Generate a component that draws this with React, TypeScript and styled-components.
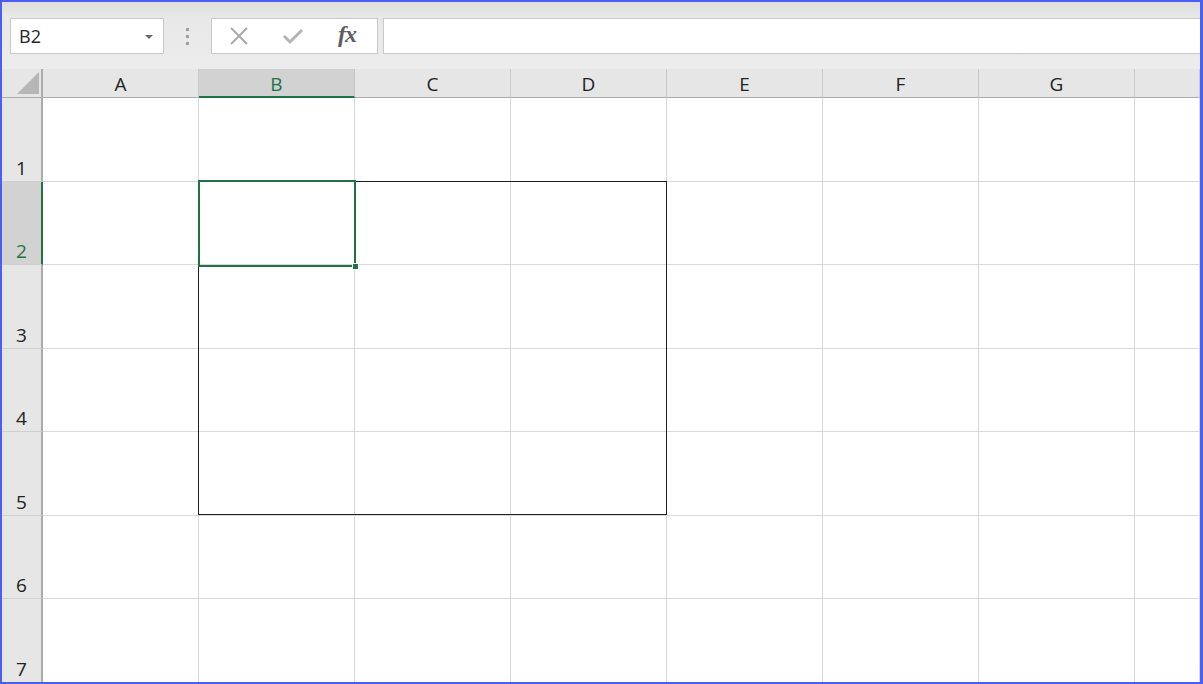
import React from 'react';
import styled, { createGlobalStyle } from 'styled-components';

const GlobalStyle = createGlobalStyle`
  html, body {
    margin: 0;
    padding: 0;
    background: #ffffff;
  }
  * {
    box-sizing: border-box;
  }
`;

const columns = ['A', 'B', 'C', 'D', 'E', 'F', 'G', ''];
const rows = [1, 2, 3, 4, 5, 6, 7];
const ACTIVE_COL = 'B';
const ACTIVE_ROW = 2;

const App = () => {
  return (
    <Frame>
      <GlobalStyle />
      <Toolbar>
        <NameBox>
          <NameText>B2</NameText>
          <Caret />
        </NameBox>
        <Grip>
          <Dot />
          <Dot />
          <Dot />
        </Grip>
        <FormulaButtons>
          <IconButton>
            <svg width="20" height="20" viewBox="0 0 20 20">
              <path d="M2 2 L18 18 M18 2 L2 18" stroke="#a8a8a8" strokeWidth="1.8" fill="none" />
            </svg>
          </IconButton>
          <IconButton>
            <svg width="22" height="18" viewBox="0 0 22 18">
              <path d="M2 9 L8 15 L20 3" stroke="#b4b4b4" strokeWidth="3" fill="none" />
            </svg>
          </IconButton>
          <FxLabel>fx</FxLabel>
        </FormulaButtons>
        <FormulaInput />
      </Toolbar>

      <Sheet>
        <Corner>
          <svg width="22" height="22" viewBox="0 0 22 22">
            <polygon points="22,0 22,22 0,22" fill="#b6b6b6" />
          </svg>
        </Corner>
        {columns.map((c, i) => (
          <ColHeader key={'h' + i} active={c === ACTIVE_COL}>
            {c}
          </ColHeader>
        ))}
        {rows.map((r) => (
          <React.Fragment key={r}>
            <RowHeader active={r === ACTIVE_ROW}>{r}</RowHeader>
            {columns.map((c, i) => (
              <Cell key={r + '-' + i} />
            ))}
          </React.Fragment>
        ))}
        <RangeBox />
        <Selection />
        <FillHandle />
      </Sheet>
    </Frame>
  );
};

const Frame = styled.div`
  width: 1203px;
  height: 684px;
  border-style: solid;
  border-color: #4b5df2;
  border-width: 2px 3px 2px 2px;
  overflow: hidden;
  display: flex;
  flex-direction: column;
  background: #ffffff;
  font-family: 'Open Sans', 'Noto Sans', sans-serif;
`;

const Toolbar = styled.div`
  height: 67px;
  flex: none;
  display: flex;
  align-items: flex-start;
  padding: 16px 0 0 8px;
  background: linear-gradient(#dddddd 0px, #e8e8e8 14px, #ececec 100%);
`;

const NameBox = styled.div`
  width: 154px;
  height: 36px;
  background: #ffffff;
  border: 1px solid #c9c9c9;
  display: flex;
  align-items: center;
  justify-content: space-between;
  padding: 0 10px 0 8px;
`;

const NameText = styled.span`
  font-family: 'Open Sans', sans-serif;
  font-size: 18px;
  color: #262626;
`;

const Caret = styled.span`
  width: 0;
  height: 0;
  border-left: 4px solid transparent;
  border-right: 4px solid transparent;
  border-top: 4px solid #6a6a6a;
  margin-top: 1px;
`;

const Grip = styled.div`
  width: 47px;
  height: 36px;
  display: flex;
  flex-direction: column;
  align-items: center;
  justify-content: center;
  gap: 4px;
`;

const Dot = styled.span`
  width: 3px;
  height: 3px;
  background: #a0a0a0;
`;

const FormulaButtons = styled.div`
  width: 167px;
  height: 36px;
  background: #ffffff;
  border: 1px solid #c9c9c9;
  display: flex;
  align-items: center;
  padding-left: 8px;
  gap: 17px;
`;

const IconButton = styled.span`
  width: 37px;
  display: flex;
  align-items: center;
  justify-content: center;
`;

const FxLabel = styled.span`
  font-family: 'Liberation Serif', 'DejaVu Serif', serif;
  font-style: italic;
  font-weight: bold;
  font-size: 24px;
  color: #5e5e5e;
  letter-spacing: -1px;
  margin-left: 10px;
  margin-top: -4px;
`;

const FormulaInput = styled.div`
  flex: 1;
  height: 36px;
  margin-left: 5px;
  background: #ffffff;
  border: 1px solid #c9c9c9;
  border-right: none;
`;

const Sheet = styled.div`
  position: relative;
  flex: 1;
  display: grid;
  grid-template-columns: 41px repeat(7, 156px) 1fr;
  grid-template-rows: 29px repeat(7, 83.5px);
  background: #ffffff;
`;

const Corner = styled.div`
  background: #e6e6e6;
  border-right: 2px solid #ababab;
  border-bottom: 1px solid #ababab;
  display: flex;
  align-items: flex-end;
  justify-content: flex-end;
  padding: 0 2px 3px 0;
`;

const ColHeader = styled.div<{ active?: boolean }>`
  background: ${(p) => (p.active ? '#d2d2d2' : '#e6e6e6')};
  color: ${(p) => (p.active ? '#217346' : '#222222')};
  border-right: 1px solid ${(p) => (p.active ? '#c4c4c4' : '#cacaca')};
  border-bottom: ${(p) => (p.active ? '2px solid #217346' : '1px solid #ababab')};
  display: flex;
  align-items: center;
  justify-content: center;
  padding-top: 2px;
  font-size: 19px;
`;

const RowHeader = styled.div<{ active?: boolean }>`
  background: ${(p) => (p.active ? '#d2d2d2' : '#e6e6e6')};
  color: ${(p) => (p.active ? '#217346' : '#222222')};
  border-right: 2px solid ${(p) => (p.active ? '#217346' : '#ababab')};
  border-bottom: 1px solid #d0d0d0;
  display: flex;
  align-items: flex-end;
  justify-content: center;
  padding-bottom: 1px;
  font-size: 19px;
  line-height: 24px;
`;

const Cell = styled.div`
  border-right: 1px solid #d9d9d9;
  border-bottom: 1px solid #d9d9d9;
`;

const RangeBox = styled.div`
  position: absolute;
  left: 196px;
  top: 112px;
  width: 469px;
  height: 334px;
  border: 1px solid #1e1e1e;
  pointer-events: none;
`;

const Selection = styled.div`
  position: absolute;
  left: 196px;
  top: 111px;
  width: 158px;
  height: 87px;
  border: 2px solid #217346;
  pointer-events: none;
`;

const FillHandle = styled.div`
  position: absolute;
  left: 350px;
  top: 194px;
  width: 7px;
  height: 7px;
  background: #217346;
  border: 1px solid #ffffff;
`;

export default App;
